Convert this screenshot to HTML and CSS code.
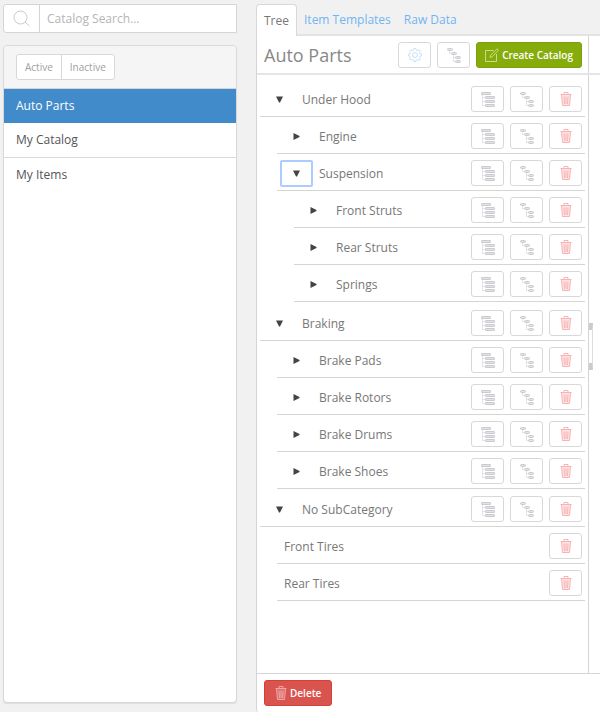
FILE: index.html
```html
<!DOCTYPE html>
<html lang="en">
<head>
<meta charset="utf-8">
<title>Catalogs</title>
<link rel="stylesheet" href="styles.css">
</head>
<body>
<svg class="sprite" aria-hidden="true">
  <symbol id="trash" viewBox="0 0 12 16">
    <path d="M1.500 4h9l-1 10.500h-7z" fill="currentColor" opacity=".35"/>
    <path d="M.5 3.500h11M4 3V1.500h4V3M1.500 4l1 10.500h7l1-10.500M4 5.500l.5 7.500M6 5.500V13M8 5.500L7.500 13" fill="none" stroke="currentColor"/>
  </symbol>
  <symbol id="subtree" viewBox="0 0 14 15">
    <path d="M1.500 3v10.500H4M1.500 5.500H4M1.500 9.500H4" fill="none" stroke="currentColor" opacity=".5"/>
    <g class="bars"><rect x=".5" y=".5" width="9" height="2" rx=".5"/><rect x="4.500" y="4.500" width="9" height="2" rx=".5"/><rect x="4.500" y="8.500" width="9" height="2" rx=".5"/><rect x="4.500" y="12.500" width="9" height="2" rx=".5"/></g>
  </symbol>
  <symbol id="branch" viewBox="0 0 14 15">
    <path d="M2.500 3v2.500H4M6.500 7v6.500H9M6.500 9.500H9" fill="none" stroke="currentColor" opacity=".5"/>
    <g class="bars"><rect x=".5" y=".5" width="5" height="2" rx="1"/><rect x="4.500" y="4.500" width="5" height="2" rx="1"/><rect x="8.500" y="8.500" width="5" height="2" rx="1"/><rect x="8.500" y="12.500" width="5" height="2" rx="1"/></g>
  </symbol>
  <symbol id="down" viewBox="0 0 7 7"><path d="M0 .5h7L4 6.500H3z" fill="currentColor"/></symbol>
  <symbol id="right" viewBox="0 0 7 7"><path d="M.5 0v7l6-3V3z" fill="currentColor"/></symbol>
</svg>

<div class="app">
  <aside class="sidebar">
    <form class="search">
      <label for="q" aria-label="Search"><svg width="18" height="18" viewBox="0 0 18 18"><circle cx="7.500" cy="7.500" r="6.500"/><path d="M12 12l4.500 4"/></svg></label>
      <input id="q" type="text" placeholder="Catalog Search...">
    </form>
    <section class="catalogs">
      <header class="filter"><button type="button">Active</button><button type="button">Inactive</button></header>
      <ul>
        <li><a class="selected" href="#">Auto Parts</a></li>
        <li><a href="#">My Catalog</a></li>
        <li><a href="#">My Items</a></li>
      </ul>
    </section>
  </aside>

  <main class="main">
    <nav class="tabs"><a class="current" href="#">Tree</a><a href="#">Item Templates</a><a href="#">Raw Data</a></nav>
    <div class="panel">
      <div class="toolbar">
        <div class="bar">
          <h1>Auto Parts</h1>
          <button class="btn gear" type="button" aria-label="Settings"><svg width="14" height="14" viewBox="0 0 14 14"><path d="M6 .5h2l.4 1.700 1.200.5 1.500-.9 1.300 1.300-.9 1.500.5 1.200 1.500.4v1.800l-1.600.4-.5 1.200.9 1.500-1.300 1.300-1.500-.9-1.200.5L8 13.500H6l-.4-1.500-1.200-.5-1.500.9-1.300-1.300.9-1.500L2 8.400.5 8V6.200L2 5.800l.5-1.200-.9-1.500 1.300-1.300 1.500.9 1.200-.5z"/><circle cx="7" cy="7" r="2.500"/></svg></button>
          <button class="btn" type="button" aria-label="Branch"><svg width="14" height="15"><use href="#branch"/></svg></button>
          <button class="btn create" type="button"><svg width="14" height="14" viewBox="0 0 14 14"><path d="M8.500 2.500h-8v11h11V6M5 9.500l.6-2.200L12 .8l1.500 1.400L7.200 8.800z"/></svg>Create Catalog</button>
        </div>
      </div>
      <div class="body">
        <div class="pane">
          <ul class="tree" id="tree"></ul>
        </div>
        <div class="splitter"></div>
      </div>
      <footer class="footer"><button class="btn delete" type="button"><svg width="12" height="16"><use href="#trash"/></svg>Delete</button></footer>
    </div>
  </main>
</div>
<script src="tree.js"></script>
</body>
</html>
```
FILE: styles.css
```css
* { box-sizing: border-box; }
body { margin: 0; background: #f1f1f1; color: #777; font: 12px/18px "Open Sans", "Noto Sans", sans-serif; }
button, input { font: inherit; color: inherit; margin: 0; }
ul { list-style: none; margin: 0; padding: 0; }
a { color: inherit; text-decoration: none; }
svg { display: block; flex: none; }
.sprite { position: absolute; width: 0; height: 0; }
.bars { fill: #e2e2e7; stroke: currentColor; }

.app { display: grid; grid-template-columns: 234fr 344fr; gap: 19px; min-height: 100vh; padding: 4px 0 0 3px; }

.sidebar { display: flex; flex-direction: column; gap: 12px; padding-bottom: 9px; }
.search { display: flex; height: 29px; border: 1px solid #d5d5d5; border-radius: 3px 0 0 3px; background: #fff; }
.search label { display: flex; align-items: center; justify-content: center; width: 36px; border-right: 1px solid #d5d5d5; }
.search svg { fill: none; stroke: #ccc; stroke-width: 1; }
.search input { flex: 1; min-width: 0; border: 0; padding: 0 7px; background: none; outline: 0; }
.search input::placeholder { color: #b5b5b5; opacity: 1; }

.catalogs { flex: 1; border: 1px solid #d9d9d9; border-radius: 4px; background: #fff; box-shadow: 0 1px 1px #ddd; }
.filter { display: flex; padding: 8px 12px; background: #f5f5f5; border-bottom: 1px solid #d5d5d5; border-radius: 4px 4px 0 0; }
.filter button { height: 26px; padding: 0 8px; border: 1px solid #d8d8d8; background: #fff; color: #a0a0a0; font-size: 10px; font-weight: 500; }
.filter button:first-child { border-radius: 3px 0 0 3px; }
.filter button:last-child { margin-left: -1px; border-radius: 0 3px 3px 0; }
.catalogs li a { display: block; padding: 8px 12px; color: #555; }
.catalogs li + li + li { border-top: 1px solid #d9d9d9; }
.catalogs li a.selected { background: #428bca; color: #fff; }

.main { display: flex; flex-direction: column; min-width: 0; }
.tabs { display: flex; height: 32px; border-bottom: 2px solid #e3e3e3; }
.tabs a { padding: 7px 0 7px 7px; margin-right: 6px; color: #72b5f2; }
.tabs .current { height: 32px; margin-right: 0; padding: 7px; border: 1px solid #d8d8d8; border-bottom: 0; border-radius: 4px 4px 0 0; background: #fff; color: #777; }
.panel { flex: 1; display: flex; flex-direction: column; border-left: 1px solid #d5d5d5; background: #fff; border-radius: 0 0 0 3px; }
.toolbar { display: flex; height: 39px; padding-right: 11px; border-bottom: 2px solid #e5e5e5; }
.bar { flex: 1; display: flex; align-items: center; gap: 6px; padding: 1px 6px 0 7px; border-right: 1px solid #d5d5d5; }
h1 { flex: 1; margin: 0; font-size: 18px; line-height: 24px; font-weight: 400; color: #888; white-space: nowrap; }
.btn { display: flex; align-items: center; justify-content: center; flex: none; width: 33px; height: 26px; padding: 0; border: 1px solid #d8d8d8; border-radius: 3px; background: #fff; color: #cacad0; }
.gear svg { fill: none; stroke: #c5e1fa; }
.create, .delete { width: auto; gap: 3px; padding: 0 8px; color: #fff; font-size: 10px; font-weight: 600; white-space: nowrap; }
.create { background: #86ac0c; border-color: #7c9f0b; }
.create svg { fill: none; stroke: #c9dc8a; }
.delete { background: #d9534f; border-color: #d43f3a; padding: 0 10px; }
.delete svg { color: #eea6a4; }
.trash { color: #f8b4b4; }

.body { flex: 1; display: flex; align-items: stretch; }
.pane { flex: 1; padding: 5px 3px 0 3px; border-right: 1px solid #d5d5d5; }
.tree ul { margin-left: 17px; padding-bottom: 1px; }
.row { display: flex; align-items: center; gap: 6px; height: 37px; padding: 2px 3px 0; border-bottom: 1px solid #d5d5d5; }
.row .name { flex: 1; padding-top: 2px; }
.leaf .name { padding-left: 4px; }
.toggle { display: flex; align-items: center; justify-content: center; width: 33px; height: 27px; padding: 0; border: 1px solid transparent; background: none; color: #444; }
.toggle.focused { border: 2px solid #aaccff; border-radius: 2px; }
.splitter { align-self: center; width: 4px; height: 47px; margin: 0 7px 55px 0; border: solid #ccc; border-width: 7px 1px 7px 0; background: #fff; border-right-color: #ddd; }
.footer { padding: 6px 7px; border-top: 1px solid #d5d5d5; }
```
FILE: tree.js
```js
const data = [
  { name: "Under Hood", open: true, items: [
    { name: "Engine" },
    { name: "Suspension", open: true, focused: true, items: [
      { name: "Front Struts" }, { name: "Rear Struts" }, { name: "Springs" }
    ] }
  ] },
  { name: "Braking", open: true, items: [
    { name: "Brake Pads" }, { name: "Brake Rotors" }, { name: "Brake Drums" }, { name: "Brake Shoes" }
  ] },
  { name: "No SubCategory", open: true, items: [
    { name: "Front Tires", leaf: true }, { name: "Rear Tires", leaf: true }
  ] }
];

const button = (cls, label, icon, w, h) =>
  `<button type="button" class="${cls}" aria-label="${label}"><svg width="${w}" height="${h}"><use href="#${icon}"/></svg></button>`;

const render = (n) => `<li><div class="row${n.leaf ? " leaf" : ""}">` +
  (n.leaf ? "" : button("toggle" + (n.focused ? " focused" : ""), "Toggle", n.open ? "down" : "right", 7, 7)) +
  `<span class="name">${n.name}</span>` +
  (n.leaf ? "" : button("btn", "Add item", "subtree", 14, 15) + button("btn", "Add category", "branch", 14, 15)) +
  button("btn trash", "Delete", "trash", 12, 16) + "</div>" +
  (n.items ? `<ul>${n.items.map(render).join("")}</ul>` : "") + "</li>";

document.getElementById("tree").innerHTML = data.map(render).join("");
```
